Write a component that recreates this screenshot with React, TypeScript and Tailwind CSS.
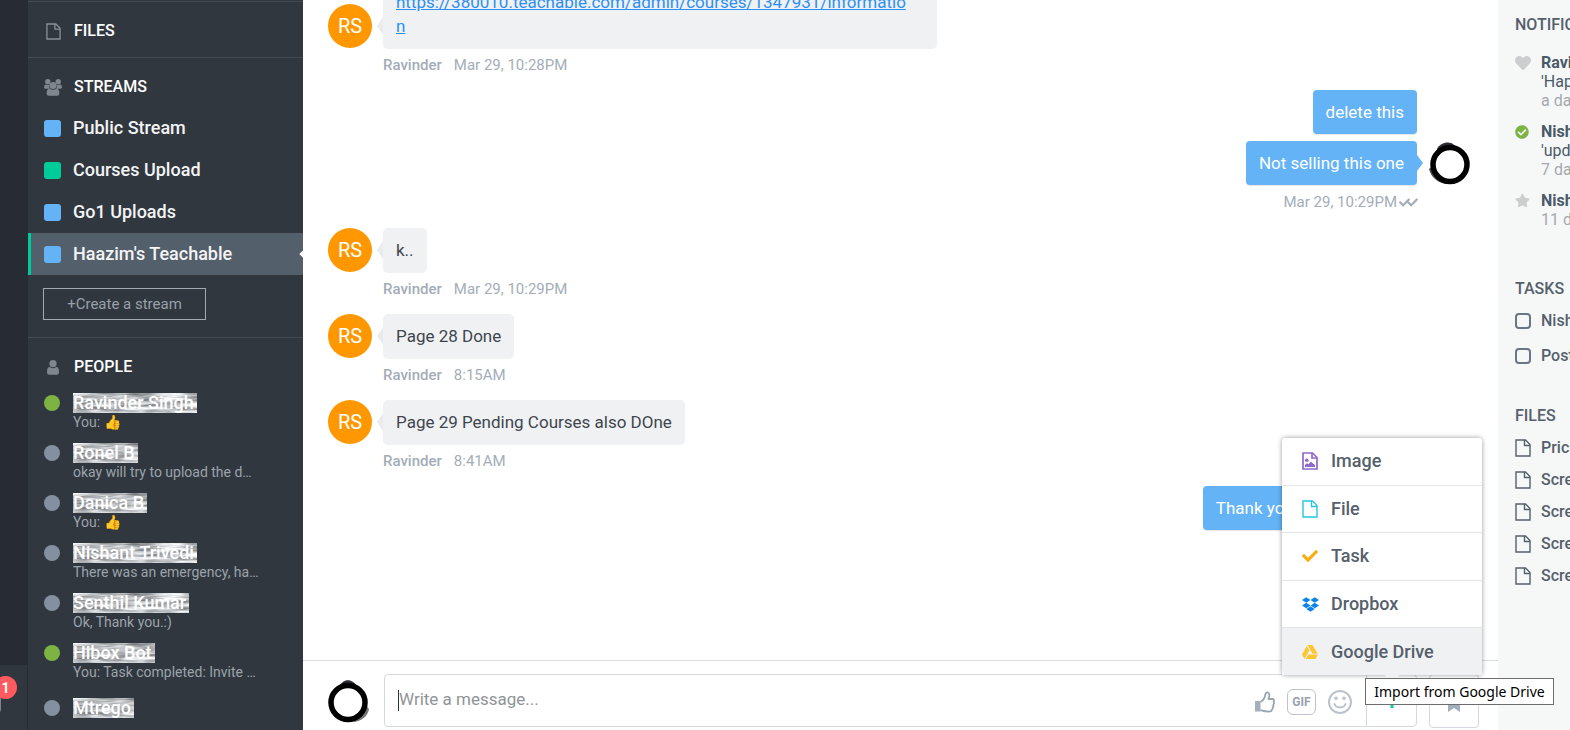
import type { ReactNode } from "react";
import { FaCheck, FaCheckCircle, FaDropbox, FaGoogleDrive, FaHeart, FaStar } from "react-icons/fa";

function FileIcon({ className }: { className: string }) {
  return (
    <svg viewBox="0 0 16 18" className={className} fill="none" stroke="currentColor" strokeWidth="1.4" aria-hidden="true">
      <path d="M1 1h9.5L15 5.500V17H1z" />
      <path d="M9.500 1v5.500H15" />
    </svg>
  );
}

function ImageIcon() {
  return (
    <svg viewBox="0 0 16 18" className="h-[18px] w-4 text-[#8f6bc9]" fill="none" stroke="currentColor" strokeWidth="1.700" aria-hidden="true">
      <path d="M1 1h9.500L15 5.500V17H1z" />
      <path d="M10 1v5h5" />
      <circle cx="4.800" cy="8.300" r="1.800" fill="currentColor" stroke="none" />
      <path d="M3 15v-2.200l2-1.600 1.500 1 2.500-2.700 2 2L13 13v2z" fill="currentColor" stroke="none" />
    </svg>
  );
}

function GroupIcon() {
  return (
    <svg viewBox="0 0 18 17" className="h-[17px] w-[18px] text-[#7f868d]" fill="currentColor" aria-hidden="true">
      <circle cx="3.800" cy="2.700" r="2.700" />
      <circle cx="14.200" cy="2.700" r="2.700" />
      <path d="M0 8.500C0 6.500.8 5.400 2 5.400c1 .7 2.200.8 3.300.3-.5 1.700-.1 3 .9 4.100H2.500C1 9.800 0 9.500 0 8.500zM18 8.500c0-2-.8-3.100-2-3.100-1 .7-2.200.8-3.300.3.5 1.700.1 3-.9 4.100h3.700c1.500 0 2.500-.3 2.500-1.300z" />
      <circle cx="9" cy="6.500" r="3.600" />
      <path d="M2.600 14.300c0-2.800 1-4.600 3-4.600 2 1.500 4.800 1.500 6.800 0 2 0 3 1.800 3 4.600 0 1.700-1 2.500-2.500 2.500H5.100c-1.500 0-2.500-.8-2.500-2.500z" />
    </svg>
  );
}

function PersonIcon() {
  return (
    <svg viewBox="0 0 12 15" className="h-[15px] w-3 text-[#7f868d]" fill="currentColor" aria-hidden="true">
      <circle cx="6" cy="3.700" r="3.600" />
      <path d="M0 12c0-3 .8-5 2.600-5 2 1.500 4.800 1.500 6.800 0C11.200 7 12 9 12 12c0 1.800-.8 2.800-2.200 2.800H2.200C.8 14.800 0 13.800 0 12z" />
    </svg>
  );
}

function ThumbIcon() {
  return (
    <svg viewBox="0 0 20 22" className="h-[22px] w-5" aria-hidden="true">
      <path d="M0 10h5.500v10.500H0z" fill="#a3afbc" />
      <path
        d="M5.500 11C8 9.500 9.800 6.800 10.300 4c.2-1.500.7-2.700 2-2.700 2.200 0 2.600 2.500 1.200 6.700h3.700c1.700 0 2.300 1.500 1.400 2.700.6 1 .5 2.100-.3 2.900.4 1 .2 2-.6 2.700.2 1-.1 1.900-.8 2.500-.3 1.500-1.200 1.900-2.900 1.900-3 0-4.800-.3-8.500-1.500"
        fill="none"
        stroke="#98a5b3"
        strokeWidth="1.800"
        strokeLinejoin="round"
      />
    </svg>
  );
}

function SmileIcon() {
  return (
    <svg viewBox="0 0 24 24" className="size-6" fill="none" stroke="#bcc3cc" aria-hidden="true">
      <circle cx="12" cy="12" r="11" strokeWidth="2" />
      <path d="M6.500 14c1.300 4.500 9.700 4.500 11 0" strokeWidth="2" strokeLinecap="round" />
      <circle cx="8" cy="8.300" r="1.800" fill="#bcc3cc" stroke="none" />
      <circle cx="16" cy="8.300" r="1.800" fill="#bcc3cc" stroke="none" />
    </svg>
  );
}

function MyAvatar({ flipped = false }: { flipped?: boolean }) {
  return (
    <svg viewBox="0 0 44 44" className="size-11 shrink-0" role="img" aria-label="My avatar">
      <path d={flipped ? "M11 9C14-1 25-1 29 8z" : "M10 8C13 1 24-1 28 5l-4 4H10z"} fill="#2b2f33" />
      {flipped ? (
        <path d="M41 30c-1 7-7 12-15 13l-3-4 15-13z" fill="#77797c" />
      ) : (
        <path d="M2 28c2 8 8 13 16 15l4-4L6 25z" fill="#4a4d50" />
      )}
      <circle cx={flipped ? 20 : 23} cy="23.500" r="17" fill="#fff" stroke="#000" strokeWidth="5.500" />
    </svg>
  );
}

function SectionTitle({ icon, children }: { icon: ReactNode; children: ReactNode }) {
  return (
    <h2 className="flex h-6 items-center gap-3 pl-4 text-base font-medium text-white">
      <span className="flex w-[18px] justify-center">{icon}</span>
      {children}
    </h2>
  );
}

const streams = [
  { name: "Public Stream", color: "bg-[#64b3f6]", active: false },
  { name: "Courses Upload", color: "bg-[#00cc9a]", active: false },
  { name: "Go1 Uploads", color: "bg-[#64b3f6]", active: false },
  { name: "Haazim's Teachable", color: "bg-[#64b3f6]", active: true },
];

const people = [
  { name: "Ravinder Singh", last: "You: 👍", online: true },
  { name: "Ronel B", last: "okay will try to upload the d…", online: false },
  { name: "Danica B", last: "You: 👍", online: false },
  { name: "Nishant Trivedi", last: "There was an emergency, ha…", online: false },
  { name: "Senthil Kumar", last: "Ok, Thank you.:)", online: false },
  { name: "Hibox Bot", last: "You: Task completed: Invite …", online: true },
  { name: "Mtrego", last: "", online: false },
];

function Smear() {
  return (
    <svg className="absolute inset-0 size-full" aria-hidden="true">
      <filter id="smear" x="0" y="0" width="100%" height="100%" colorInterpolationFilters="sRGB">
        <feTurbulence type="fractalNoise" baseFrequency="0.035 0.28" numOctaves="3" seed="4" />
        <feColorMatrix values="0.900 0 0 0 0.290  0.900 0 0 0 0.300  0.900 0 0 0 0.310  0 0 0 0 1" />
      </filter>
      <rect width="100%" height="100%" filter="url(#smear)" />
    </svg>
  );
}

function Sidebar() {
  return (
    <nav className="flex w-[275px] shrink-0 flex-col overflow-hidden bg-[#31373f]">
      <div className="mt-px border-y border-[#434a53] pt-[17px] pb-[14px]">
        <SectionTitle icon={<FileIcon className="h-[17px] w-[15px] text-[#8a8f95]" />}>FILES</SectionTitle>
      </div>
      <div className="border-b border-[#434a53] py-[17px]">
        <SectionTitle icon={<GroupIcon />}>STREAMS</SectionTitle>
        <ul className="pt-2">
          {streams.map((s) => (
            <li key={s.name}>
              <a
                href="#stream"
                className={
                  s.active
                    ? "relative flex h-[42px] items-center gap-3 border-l-[3px] border-[#00cc9a] bg-[#535f6a] pl-[13px] text-lg font-medium text-[#f3f4f5]"
                    : "flex h-[42px] items-center gap-3 pl-4 text-lg font-medium text-[#f3f4f5]"
                }
              >
                <span className={`size-[17px] rounded-[3px] ${s.color}`} />
                {s.name}
                {s.active && <span className="absolute -right-[6px] size-2 rotate-45 bg-white" />}
              </a>
            </li>
          ))}
        </ul>
        <button className="mt-[13px] ml-[15px] block h-8 w-[163px] border border-[#a3a9b0] text-[15px] text-[#98a0a8]">+Create a stream</button>
      </div>
      <div className="pt-[17px]">
        <SectionTitle icon={<PersonIcon />}>PEOPLE</SectionTitle>
        <ul className="pt-[11px]">
          {people.map((p) => (
            <li key={p.name} className="flex h-[50px] gap-3 pl-4 last:pt-[5px]">
              <span className={p.online ? "mt-[5px] mr-px size-4 rounded-full bg-[#7db343]" : "mt-[5px] mr-px size-4 rounded-full bg-[#8490a0]"} />
              <div className="flex flex-col items-start pt-[3px]">
                <a href="#person" className="relative h-5 pr-[3px] text-lg leading-5 font-medium text-white">
                  <Smear />
                  <span className="relative">{p.name}</span>
                </a>
                <span className="text-sm leading-[19px] text-[#9ba3ab]">{p.last}</span>
              </div>
            </li>
          ))}
        </ul>
      </div>
    </nav>
  );
}

function Received({ time, children }: { time: string; children: ReactNode }) {
  return (
    <div className="flex flex-col items-start">
      <div className="flex items-end gap-[11px]">
        <span className="flex size-11 shrink-0 items-center justify-center rounded-full bg-[#ff9800] text-xl text-white">RS</span>
        <div className="relative max-w-[554px] rounded-[5px] bg-[#f0f1f3] px-[13px] py-[10px] text-[17px] leading-6 text-[#3f464e] shadow-[0_1px_1px_rgba(0,0,0,0.06)]">
          <svg viewBox="0 0 6 18" className="absolute bottom-[13px] -left-[6px] h-[18px] w-[6px]" aria-hidden="true">
            <path d="M6 0v18L0 9z" fill="#e9ebed" />
          </svg>
          {children}
        </div>
      </div>
      <p className="flex h-[42px] gap-3 pt-[7px] pl-[55px] text-[15px] leading-[21px] text-[#a3adb8]">
        <span className="font-medium">Ravinder</span>
        <span>{time}</span>
      </p>
    </div>
  );
}

function Sent({ children, tail = false }: { children: ReactNode; tail?: boolean }) {
  return (
    <div className="relative rounded-[4px] bg-[#64b3f6] px-[13px] py-[10px] text-[17px] leading-6 text-white shadow-[0_1px_1px_rgba(0,0,0,0.1)]">
      {children}
      {tail && (
        <svg viewBox="0 0 6 16" className="absolute top-[14px] -right-[6px] h-4 w-[6px]" aria-hidden="true">
          <path d="M0 0v16l6-8z" fill="#64b3f6" />
        </svg>
      )}
    </div>
  );
}

const menu = [
  { label: "Image", icon: <ImageIcon /> },
  { label: "File", icon: <FileIcon className="h-[18px] w-4 text-[#26c6da]" /> },
  { label: "Task", icon: <FaCheck className="size-4 text-[#f9ae13]" /> },
  { label: "Dropbox", icon: <FaDropbox className="size-[17px] text-[#0d84e8]" /> },
  { label: "Google Drive", icon: <FaGoogleDrive className="size-4 text-[#fdc62e]" /> },
];

function AttachMenu() {
  return (
    <div className="absolute -right-[66px] bottom-[51px] z-10 w-[200px]">
      <ul className="flex h-[237px] flex-col divide-y divide-[#e4e6e9] rounded-[3px] bg-white shadow-[0_0_5px_rgba(0,0,0,0.4)]">
        {menu.map((m) => (
          <li key={m.label} className="flex flex-1 last:bg-[#f0f1f3]">
            <button type="button" className="flex flex-1 items-center gap-3 pl-[19px] text-left text-lg font-medium text-[#55606c]">
              <span className="flex w-[18px] justify-center">{m.icon}</span>
              {m.label}
            </button>
          </li>
        ))}
      </ul>
      <span className="absolute right-[84px] -bottom-[5px] size-3 rotate-45 bg-[#f0f1f3]" />
      <span
        role="tooltip"
        className="absolute top-[240px] left-[83px] flex h-[27px] w-[189px] items-center justify-center border border-[#6d6d6d] bg-white font-['Noto_Sans',sans-serif] text-sm whitespace-nowrap text-black"
      >
        Import from Google Drive
      </span>
    </div>
  );
}

function Chat() {
  return (
    <main className="flex min-w-0 flex-1 flex-col bg-white">
      <section className="flex min-h-0 flex-1 flex-col justify-end overflow-hidden pr-[27px] pb-[130px] pl-[25px]">
        <Received time="Mar 29, 10:28PM">
          <a href="#course" className="block w-[528px] text-[#2b90f5] underline">
            https://380010.teachable.com/admin/courses/1347931/informatio
            <br />n
          </a>
        </Received>
        <div className="flex flex-col items-end">
          <div className="mb-[7px] pr-[54px]">
            <Sent>delete this</Sent>
          </div>
          <div className="flex items-center gap-[10px]">
            <Sent tail>Not selling this one</Sent>
            <MyAvatar />
          </div>
          <p className="flex h-[43px] items-start pt-[7px] pr-[53px] text-[15px] leading-[21px] text-[#a3adb8]">
            Mar 29, 10:29PM
            <FaCheck className="mt-[5px] ml-[2px] size-[11px]" />
            <FaCheck className="mt-[5px] -ml-[3px] size-[11px]" />
          </p>
        </div>
        <Received time="Mar 29, 10:29PM">k..</Received>
        <Received time="8:15AM">Page 28 Done</Received>
        <Received time="8:41AM">Page 29 Pending Courses also DOne</Received>
        <div className="flex justify-end pr-[54px]">
          <Sent>Thank you for the update</Sent>
        </div>
      </section>
      <form className="flex h-[70px] shrink-0 items-start border-t border-[#d9dce2] pt-[13px] pr-[19px] pl-[25px]">
        <div className="pt-[5px]">
          <MyAvatar flipped />
        </div>
        <div className="ml-3 flex h-[53px] flex-1 rounded-[4px] border border-[#d5d8df]">
          <div className="flex min-w-0 flex-1 items-center pl-[13px]">
            <span className="h-[21px] w-px bg-[#2b3440]" />
            <input
              aria-label="Message"
              placeholder="Write a message..."
              className="h-full min-w-0 flex-1 pb-1 text-[17px] outline-none placeholder:text-[#8f9499]"
            />
          </div>
          <div className="flex items-center gap-3 pr-[14px] pt-[3px]">
            <button type="button" aria-label="Like">
              <ThumbIcon />
            </button>
            <button type="button" className="flex h-[26px] w-[29px] items-center justify-center rounded-[6px] border border-[#bcc3cc] text-xs font-bold text-[#98a3af]">
              GIF
            </button>
            <button type="button" aria-label="Emoji">
              <SmileIcon />
            </button>
          </div>
          <div className="relative flex w-[50px] items-center justify-center border-l border-[#d5d8df]">
            <button type="button" aria-label="Attach">
              <svg viewBox="0 0 14 14" className="size-[14px]" stroke="#00cc9a" strokeWidth="3" aria-hidden="true">
                <path d="M7 0v14M0 7h14" />
              </svg>
            </button>
            <AttachMenu />
          </div>
        </div>
        <button type="button" aria-label="Bookmark" className="ml-3 flex h-[54px] w-[50px] items-center justify-center rounded-[4px] border border-[#d5d8df]">
          <svg viewBox="0 0 12 18" className="mt-1 h-[18px] w-3" fill="#a3afbc" aria-hidden="true">
            <path d="M0 0h12v18l-6-4-6 4z" />
          </svg>
        </button>
      </form>
    </main>
  );
}

const notifications = [
  { icon: <FaHeart className="size-4 text-[#cbcdce]" />, lines: ["Ravinder", "'Happy"], when: "a day ago" },
  { icon: <FaCheckCircle className="size-[14px] text-[#7db343]" />, lines: ["Nishant", "'update"], when: "7 days ago" },
  { icon: <FaStar className="size-[15px] text-[#cbcdce]" />, lines: ["Nishant"], when: "11 days ago" },
];

const files = ["Pricing", "Screen 1", "Screen 2", "Screen 3", "Screen 4"];

function RightPanel() {
  return (
    <aside className="w-[72px] shrink-0 overflow-hidden bg-[#f6f8f8] pl-[17px] text-base whitespace-nowrap text-[#4a5a68]">
      <section className="h-[277px] pt-[13px]">
        <h2 className="leading-6 font-medium text-[#55606c]">NOTIFICATIONS</h2>
        <ul className="flex flex-col gap-3 pt-4">
          {notifications.map((n) => (
            <li key={n.when} className="flex gap-[10px]">
              <span className="flex h-[19px] w-4 shrink-0 items-center">{n.icon}</span>
              <div className="leading-[19px]">
                <p className="font-bold">{n.lines[0]}</p>
                {n.lines[1] && <p>{n.lines[1]}</p>}
                <p className="text-[#a5a9ad]">{n.when}</p>
              </div>
            </li>
          ))}
        </ul>
      </section>
      <section className="h-[127px]">
        <h2 className="leading-6 font-medium text-[#55606c]">TASKS</h2>
        <div className="flex flex-col gap-[11px] pt-2">
          {["Nishant", "Post"].map((t) => (
            <label key={t} className="flex h-6 items-center gap-[10px] font-medium text-[#55606c]">
              <input type="checkbox" className="size-4 shrink-0 appearance-none rounded-[4px] border-2 border-[#6b7682]" />
              {t}
            </label>
          ))}
        </div>
      </section>
      <section>
        <h2 className="leading-6 font-medium text-[#55606c]">FILES</h2>
        <ul className="flex flex-col gap-2 pt-2">
          {files.map((f) => (
            <li key={f} className="flex h-6 items-center gap-[10px] font-medium text-[#55606c]">
              <FileIcon className="h-[18px] w-4 shrink-0" />
              {f}
            </li>
          ))}
        </ul>
      </section>
    </aside>
  );
}

export default function App() {
  return (
    <div className="flex h-screen overflow-hidden font-[Roboto,sans-serif]">
      <div className="flex w-7 shrink-0 flex-col justify-end overflow-hidden bg-[#272b34]">
        <div className="relative mr-px h-[65px] bg-[#31373f]">
          <span className="absolute top-7 -left-[19px] size-5 rounded-[4px] border-2 border-[#7f868d]" />
          <span className="absolute top-[11px] -left-[6px] flex size-[23px] items-center justify-center rounded-full bg-[#ff5a5f] text-sm font-bold text-white">1</span>
        </div>
      </div>
      <Sidebar />
      <Chat />
      <RightPanel />
    </div>
  );
}
